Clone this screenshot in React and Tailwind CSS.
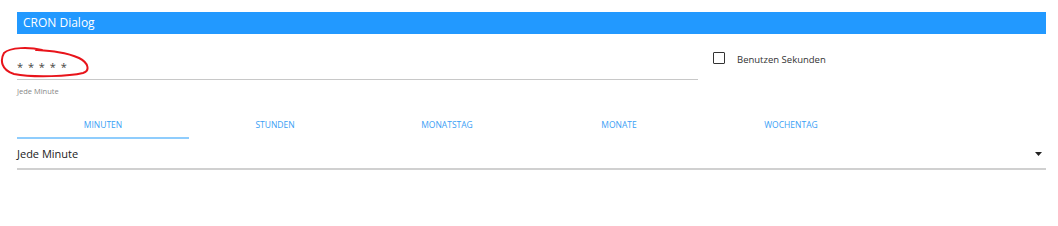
import React, { useState } from 'react';

const tabs = ['MINUTEN', 'STUNDEN', 'MONATSTAG', 'MONATE', 'WOCHENTAG'];

const App = () => {
  const [active, setActive] = useState(0);
  const [seconds, setSeconds] = useState(false);

  return (
    <div className="relative w-[1058px] h-[226px] bg-white pt-[12px] pl-[17px] pr-[12px]" style={{ fontFamily: '"Open Sans", "Noto Sans", sans-serif' }}>
      {/* Header */}
      <div className="h-[22px] bg-[#2299ff] flex items-center pl-[6px] text-white text-[12px]">CRON Dialog</div>

      {/* Expression + checkbox */}
      <div className="flex mt-[18px]">
        <div className="w-[681px]">
          <div className="h-[28px] border-b border-[#c8c8c8] flex items-center pt-[4px] text-[11px] text-[#444] tracking-[1px]">* * * * *</div>
          <div className="text-[7.5px] text-[#888] mt-[6px]">Jede Minute</div>
        </div>
        <label className="flex items-start ml-[15px] cursor-pointer">
          <button
            onClick={() => setSeconds(!seconds)}
            className="w-[12px] h-[12px] border-[1.5px] border-[#333] rounded-[1px]"
          />
          <span className="ml-[12px] text-[9.5px] text-[#333] mt-[1px]">Benutzen Sekunden</span>
        </label>
      </div>

      {/* Tabs */}
      <div className="flex mt-[17px]">
        {tabs.map((t, i) => (
          <button
            key={t}
            onClick={() => setActive(i)}
            className={`w-[172px] h-[25px] flex items-center justify-center text-[8.5px] text-[#3aa0f5] border-b-2 ${active === i ? 'border-[#8fcdfd]' : 'border-transparent'}`}
          >
            {t}
          </button>
        ))}
      </div>

      {/* Select */}
      <div className="w-full h-[31px] border-b-2 border-[#d0d0d0] flex items-center justify-between pr-[4px]">
        <span className="text-[11px] text-[#222]">Jede Minute</span>
        <svg width="7" height="4" viewBox="0 0 7 4"><path d="M0 0h7L3.5 4z" fill="#222" /></svg>
      </div>

      {/* Red annotation circle */}
      <svg className="absolute left-0 top-0 pointer-events-none" width="100" height="90" viewBox="0 0 100 90">
        <path
          d="M42 50 C30 47 10 47 4 53 C0 60 1 70 14 74 C35 78 70 76 83 73 C90 71 89 63 79 58 C66 52 50 51 36 50"
          fill="none"
          stroke="#e8141b"
          strokeWidth="2"
          strokeLinecap="round"
        />
      </svg>
    </div>
  );
};

export default App;
